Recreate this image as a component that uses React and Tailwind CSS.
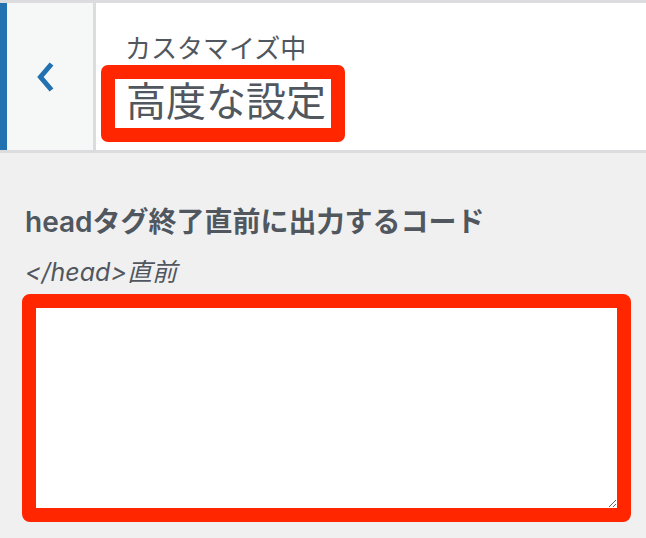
import React from 'react';

const font = { fontFamily: '"Inter", "Noto Sans CJK JP", sans-serif' };

const BackButton = () => (
  <button className="flex w-[89px] items-center border-r-[3px] border-[#dcdcde] bg-[#f6f7f7] pl-[28px]">
    <svg width="20" height="32" viewBox="0 0 20 32">
      <path d="M16.5 3 L5.5 16 L16.5 29" fill="none" stroke="#2271b1" strokeWidth="5" />
    </svg>
  </button>
);

export default function App() {
  return (
    <div
      className="w-[646px] h-[538px] overflow-hidden bg-[#f0f0f1] text-[#50575e] border-t-[3px] border-[#dcdcde]"
      style={font}
    >
      {/* Panel header */}
      <div className="flex h-[150px] border-b-[3px] border-[#dcdcde] bg-white">
        <div className="w-[7px] bg-[#2271b1]" />
        <BackButton />
        <div className="flex flex-col pl-[5px] pt-[33px]">
          <span className="pl-[24px] text-[26px] leading-[26px]">カスタマイズ中</span>
          <div className="mt-[3px] w-[244px] rounded-[7px] border-[14px] border-[#ff2600]">
            <h2 className="h-[49px] bg-white pl-[11px] text-[40px] leading-[46px]">高度な設定</h2>
          </div>
        </div>
      </div>

      {/* Control */}
      <div className="px-[22px] pt-[55px]">
        <label className="block pl-[3px] text-[28px] font-semibold leading-[28px]">
          headタグ終了直前に出力するコード
        </label>
        <span className="mt-[23px] block pl-[3px] text-[25px] italic leading-[26px]">
          &lt;/head&gt;直前
        </span>
        <div className="mt-[9px] h-[228px] w-[609px] rounded-[8px] border-[14px] border-[#ff2600]">
          <textarea className="block h-full w-full resize bg-white outline-none" />
        </div>
      </div>
    </div>
  );
}
